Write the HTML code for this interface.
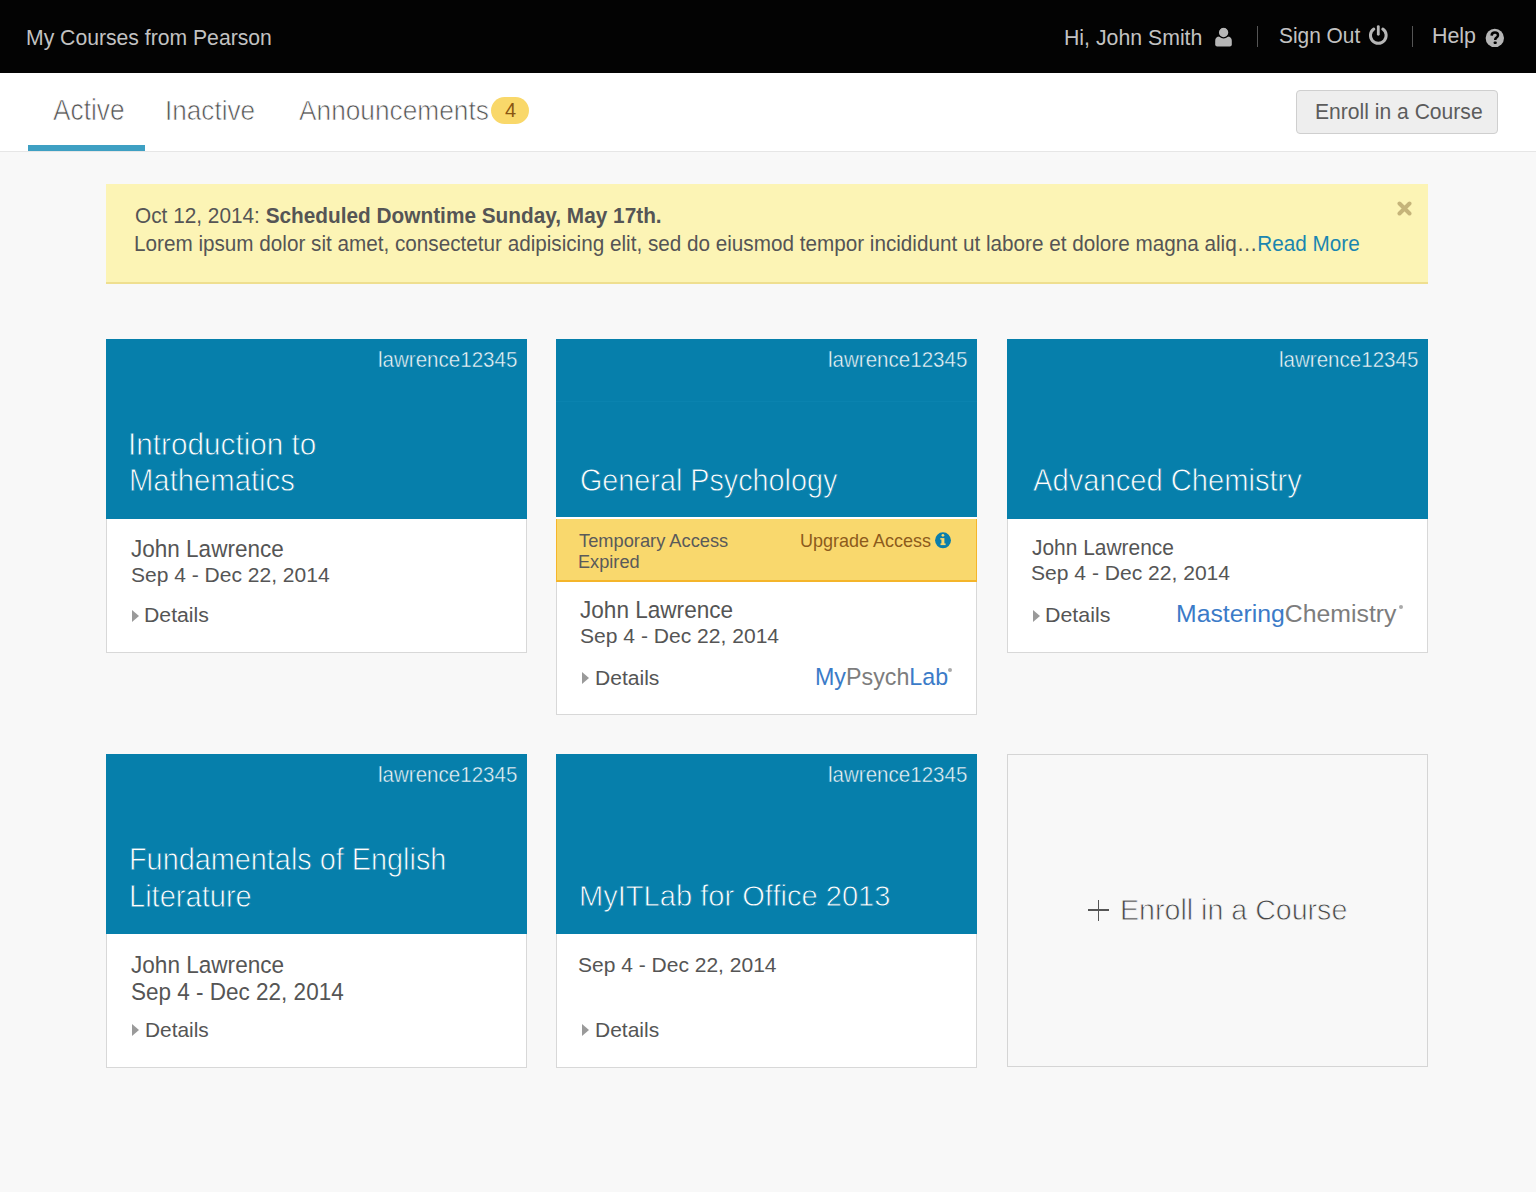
<!DOCTYPE html>
<html><head><meta charset="utf-8"><style>
html,body{margin:0;padding:0;width:1536px;height:1192px;overflow:hidden;background:#f8f8f8;font-family:"Liberation Sans",sans-serif;}
.t{position:absolute;white-space:nowrap;line-height:1;transform-origin:0 0;}
.r{position:absolute;}
</style></head><body>
<div class="r" style="left:0px;top:0px;width:1536px;height:73px;background:#030303"></div>
<div class="r" style="left:1257px;top:26px;width:1px;height:21px;background:#555"></div>
<div class="r" style="left:1412px;top:26px;width:1px;height:21px;background:#555"></div>
<svg class="r" style="left:1214px;top:27px" width="19" height="21" viewBox="0 0 19 21">
<path d="M1.2 13.9 Q1.2 9.4 5.5 9.4 L13.5 9.4 Q17.8 9.4 17.8 13.9 L17.8 17.6 Q17.8 19.6 15.8 19.6 L3.2 19.6 Q1.2 19.6 1.2 17.6 Z" fill="#b6b6b6"/>
<circle cx="9.6" cy="5.5" r="5.3" fill="#b6b6b6" stroke="#030303" stroke-width="1.2"/></svg>
<svg class="r" style="left:1366px;top:22px" width="25" height="26" viewBox="0 0 25 26">
<path d="M7.8 7.02 A7.85 7.85 0 1 0 16.8 7.02" fill="none" stroke="#b6b6b6" stroke-width="3" stroke-linecap="round"/>
<line x1="12.3" y1="4.6" x2="12.3" y2="12.3" stroke="#b6b6b6" stroke-width="2.8" stroke-linecap="round"/></svg>
<svg class="r" style="left:1485px;top:28px" width="20" height="20" viewBox="0 0 20 20">
<circle cx="9.8" cy="9.9" r="9.2" fill="#b6b6b6"/>
<path d="M6.6 7.6 Q6.8 4.6 9.9 4.6 Q13 4.6 13 7.3 Q13 8.9 11.2 9.9 Q10.2 10.5 10.2 12" fill="none" stroke="#030303" stroke-width="2.5"/>
<rect x="8.7" y="13.4" width="3" height="2.6" rx="0.8" fill="#030303"/></svg>
<div class="r" style="left:0px;top:73px;width:1536px;height:78px;background:#fff"></div>
<div class="r" style="left:0px;top:151px;width:1536px;height:1px;background:#e6e6e6"></div>
<div class="r" style="left:28px;top:145px;width:117px;height:6px;background:#3ea0c3"></div>
<div class="r" style="left:491px;top:97px;width:38px;height:27px;background:#f9d86a;border-radius:13.5px"></div>
<div class="r" style="left:1296px;top:90px;width:200px;height:42px;background:#eeeeee;border:1px solid #cfcfcf;border-radius:4px"></div>
<div class="r" style="left:106px;top:184px;width:1322px;height:98px;background:#fcf4b5;border-bottom:2px solid #efdf90"></div>
<svg class="r" style="left:1397px;top:201px" width="15" height="15" viewBox="0 0 15 15">
<path d="M2.5 2.5 L12.5 12.5 M12.5 2.5 L2.5 12.5" stroke="#c5b47a" stroke-width="4" stroke-linecap="round"/></svg>
<div class="r" style="left:106px;top:339px;width:421px;height:180px;background:#067fab"></div>
<div class="r" style="left:106px;top:519px;width:419px;height:133px;background:#fff;border:1px solid #d8d8d8;border-top:none"></div>
<div class="r" style="left:556px;top:339px;width:421px;height:180px;background:#067fab"></div>
<div class="r" style="left:556px;top:519px;width:419px;height:195px;background:#fff;border:1px solid #d8d8d8;border-top:none"></div>
<div class="r" style="left:556px;top:517px;width:421px;height:2px;background:#fff"></div>
<div class="r" style="left:556px;top:401px;width:421px;height:1px;background:#0a83af"></div>
<div class="r" style="left:1007px;top:339px;width:421px;height:180px;background:#067fab"></div>
<div class="r" style="left:1007px;top:519px;width:419px;height:133px;background:#fff;border:1px solid #d8d8d8;border-top:none"></div>
<div class="r" style="left:106px;top:754px;width:421px;height:180px;background:#067fab"></div>
<div class="r" style="left:106px;top:934px;width:419px;height:133px;background:#fff;border:1px solid #d8d8d8;border-top:none"></div>
<div class="r" style="left:556px;top:754px;width:421px;height:180px;background:#067fab"></div>
<div class="r" style="left:556px;top:934px;width:419px;height:133px;background:#fff;border:1px solid #d8d8d8;border-top:none"></div>
<div class="r" style="left:556px;top:519px;width:419px;height:61px;background:#f9d86d;border:1px solid #f5b62a;border-top:none;border-bottom:2px solid #f4b52a"></div>
<svg class="r" style="left:935px;top:532px" width="17" height="17" viewBox="0 0 17 17"><circle cx="8" cy="8.3" r="7.95" fill="#0b7eab"/><circle cx="7.9" cy="3.3" r="1.35" fill="#fad86c"/><rect x="6.4" y="6.1" width="3" height="6.5" fill="#fad86c"/><rect x="5.3" y="6.1" width="1.6" height="1.5" fill="#fad86c"/><rect x="5.5" y="11.4" width="5.1" height="1.7" fill="#fad86c"/></svg>
<div class="r" style="left:132px;top:610px;width:0;height:0;border-top:6.0px solid transparent;border-bottom:6.0px solid transparent;border-left:7px solid #9a9a9a"></div>
<div class="r" style="left:582px;top:672px;width:0;height:0;border-top:6.0px solid transparent;border-bottom:6.0px solid transparent;border-left:7px solid #9a9a9a"></div>
<div class="r" style="left:1033px;top:610px;width:0;height:0;border-top:6.0px solid transparent;border-bottom:6.0px solid transparent;border-left:7px solid #9a9a9a"></div>
<div class="r" style="left:132px;top:1024px;width:0;height:0;border-top:6.0px solid transparent;border-bottom:6.0px solid transparent;border-left:7px solid #9a9a9a"></div>
<div class="r" style="left:582px;top:1024px;width:0;height:0;border-top:6.0px solid transparent;border-bottom:6.0px solid transparent;border-left:7px solid #9a9a9a"></div>
<div class="r" style="left:1007px;top:754px;width:419px;height:311px;border:1px solid #d5d5d5;background:#f8f8f8"></div>
<div class="r" style="left:1088px;top:909.2px;width:21px;height:1.6px;background:#555"></div>
<div class="r" style="left:1097.7px;top:899.5px;width:1.6px;height:21px;background:#555"></div>
<div class="r" style="left:947.5px;top:667.5px;width:4px;height:4px;border-radius:2px;background:#aaa"></div><div class="r" style="left:1399px;top:605px;width:4px;height:4px;border-radius:2px;background:#aaa"></div><div class="t" style="left:26.41px;top:27px;font-size:22.38px;color:#c2c2c2;transform:scaleX(0.9459);">My Courses from Pearson</div>
<div class="t" style="left:1064.43px;top:27px;font-size:21.66px;color:#c2c2c2;transform:scaleX(0.9826);">Hi, John Smith</div>
<div class="t" style="left:1278.65px;top:25px;font-size:21.95px;color:#c2c2c2;transform:scaleX(0.9524);">Sign Out</div>
<div class="t" style="left:1431.79px;top:25px;font-size:21.8px;color:#c2c2c2;transform:scaleX(0.9821);">Help</div>
<div class="t" style="left:52.6px;top:96px;font-size:28.78px;color:#545454;transform:scaleX(0.913);-webkit-text-stroke:0.7px #fff;">Active</div>
<div class="t" style="left:164.55px;top:96px;font-size:28.49px;color:#545454;transform:scaleX(0.9181);-webkit-text-stroke:0.7px #fff;">Inactive</div>
<div class="t" style="left:298.5px;top:96px;font-size:28.49px;color:#545454;transform:scaleX(0.9224);-webkit-text-stroke:0.7px #fff;">Announcements</div>
<div class="t" style="left:505.0px;top:100px;font-size:20.93px;color:#8a5512;transform:scaleX(0.9545);">4</div>
<div class="t" style="left:1314.73px;top:102px;font-size:21.37px;color:#5c5c5c;transform:scaleX(0.9874);">Enroll in a Course</div>
<div class="t" style="left:134.74px;top:205px;font-size:21.66px;color:#555;transform:scaleX(0.9603);">Oct 12, 2014: <b>Scheduled Downtime Sunday, May 17th.</b></div>
<div class="t" style="left:133.8px;top:233px;font-size:21.8px;color:#555;transform:scaleX(0.949);">Lorem ipsum dolor sit amet, consectetur adipisicing elit, sed do eiusmod tempor incididunt ut labore et dolore magna aliq…<span style="color:#1a86b0">Read More</span></div>
<div class="t" style="left:377.93px;top:349px;font-size:21.22px;color:#f4f9fb;transform:scaleX(0.9683);-webkit-text-stroke:0.45px #067fab;">lawrence12345</div>
<div class="t" style="left:827.93px;top:349px;font-size:21.22px;color:#f4f9fb;transform:scaleX(0.9683);-webkit-text-stroke:0.45px #067fab;">lawrence12345</div>
<div class="t" style="left:1278.93px;top:349px;font-size:21.22px;color:#f4f9fb;transform:scaleX(0.9683);-webkit-text-stroke:0.45px #067fab;">lawrence12345</div>
<div class="t" style="left:377.93px;top:764px;font-size:21.22px;color:#f4f9fb;transform:scaleX(0.9683);-webkit-text-stroke:0.45px #067fab;">lawrence12345</div>
<div class="t" style="left:827.93px;top:764px;font-size:21.22px;color:#f4f9fb;transform:scaleX(0.9683);-webkit-text-stroke:0.45px #067fab;">lawrence12345</div>
<div class="t" style="left:128.06px;top:429px;font-size:31.4px;color:#ffffff;transform:scaleX(0.9467);-webkit-text-stroke:0.8px #067fab;">Introduction to</div>
<div class="t" style="left:129.0px;top:466px;font-size:30.81px;color:#ffffff;transform:scaleX(0.95);-webkit-text-stroke:0.8px #067fab;">Mathematics</div>
<div class="t" style="left:579.67px;top:466px;font-size:30.96px;color:#ffffff;transform:scaleX(0.929);-webkit-text-stroke:0.8px #067fab;">General Psychology</div>
<div class="t" style="left:1032.7px;top:465px;font-size:31.25px;color:#ffffff;transform:scaleX(0.9325);-webkit-text-stroke:0.8px #067fab;">Advanced Chemistry</div>
<div class="t" style="left:128.71px;top:844px;font-size:30.52px;color:#ffffff;transform:scaleX(0.9449);-webkit-text-stroke:0.8px #067fab;">Fundamentals of English</div>
<div class="t" style="left:128.7px;top:881px;font-size:30.52px;color:#ffffff;transform:scaleX(0.9524);-webkit-text-stroke:0.8px #067fab;">Literature</div>
<div class="t" style="left:578.79px;top:880px;font-size:30.38px;color:#ffffff;transform:scaleX(0.9575);-webkit-text-stroke:0.8px #067fab;">MyITLab for Office 2013</div>
<div class="t" style="left:131.24px;top:538px;font-size:23.55px;color:#555;transform:scaleX(0.9563);">John Lawrence</div>
<div class="t" style="left:131.19px;top:565px;font-size:20.78px;color:#555;transform:scaleX(1.0118);">Sep 4 - Dec 22, 2014</div>
<div class="t" style="left:143.65px;top:606px;font-size:19.77px;color:#555;transform:scaleX(1.0741);">Details</div>
<div class="t" style="left:580.3px;top:598px;font-size:23.84px;color:#555;transform:scaleX(0.9472);">John Lawrence</div>
<div class="t" style="left:580.24px;top:626px;font-size:20.93px;color:#555;transform:scaleX(1.0069);">Sep 4 - Dec 22, 2014</div>
<div class="t" style="left:594.83px;top:668px;font-size:20.35px;color:#555;transform:scaleX(1.035);">Details</div>
<div class="t" style="left:1032.2px;top:538px;font-size:21.51px;color:#555;transform:scaleX(0.9731);">John Lawrence</div>
<div class="t" style="left:1031.19px;top:563px;font-size:20.93px;color:#555;transform:scaleX(1.0066);">Sep 4 - Dec 22, 2014</div>
<div class="t" style="left:1045.16px;top:605px;font-size:20.93px;color:#555;transform:scaleX(1.0213);">Details</div>
<div class="t" style="left:131.25px;top:953px;font-size:23.84px;color:#555;transform:scaleX(0.9472);">John Lawrence</div>
<div class="t" style="left:131.26px;top:980px;font-size:23.84px;color:#555;transform:scaleX(0.9444);">Sep 4 - Dec 22, 2014</div>
<div class="t" style="left:144.58px;top:1020px;font-size:20.64px;color:#555;transform:scaleX(1.0115);">Details</div>
<div class="t" style="left:577.57px;top:955px;font-size:20.49px;color:#555;transform:scaleX(1.0255);">Sep 4 - Dec 22, 2014</div>
<div class="t" style="left:594.86px;top:1020px;font-size:20.64px;color:#555;transform:scaleX(1.018);">Details</div>
<div class="t" style="left:578.7px;top:532px;font-size:18.6px;color:#5a5a5a;transform:scaleX(0.9821);">Temporary Access</div>
<div class="t" style="left:577.73px;top:553px;font-size:18.75px;color:#5a5a5a;transform:scaleX(0.9694);">Expired</div>
<div class="t" style="left:799.83px;top:532px;font-size:18.6px;color:#8d5b1c;transform:scaleX(0.9679);">Upgrade Access</div>
<div class="t" style="left:814.7px;top:665px;font-size:24.5px;color:#7d7d7d;transform:scaleX(0.9489);"><span style="color:#3b7bc8">My</span>Psych<span style="color:#3b7bc8">Lab</span></div>
<div class="t" style="left:1176.49px;top:603px;font-size:23.5px;color:#7d7d7d;transform:scaleX(1.0551);"><span style="color:#3b7bc8">Mastering</span>Chemistry</div>
<div class="t" style="left:1120.02px;top:894px;font-size:30.38px;color:#484848;transform:scaleX(0.9416);-webkit-text-stroke:0.8px #f8f8f8;">Enroll in a Course</div>
</body></html>
